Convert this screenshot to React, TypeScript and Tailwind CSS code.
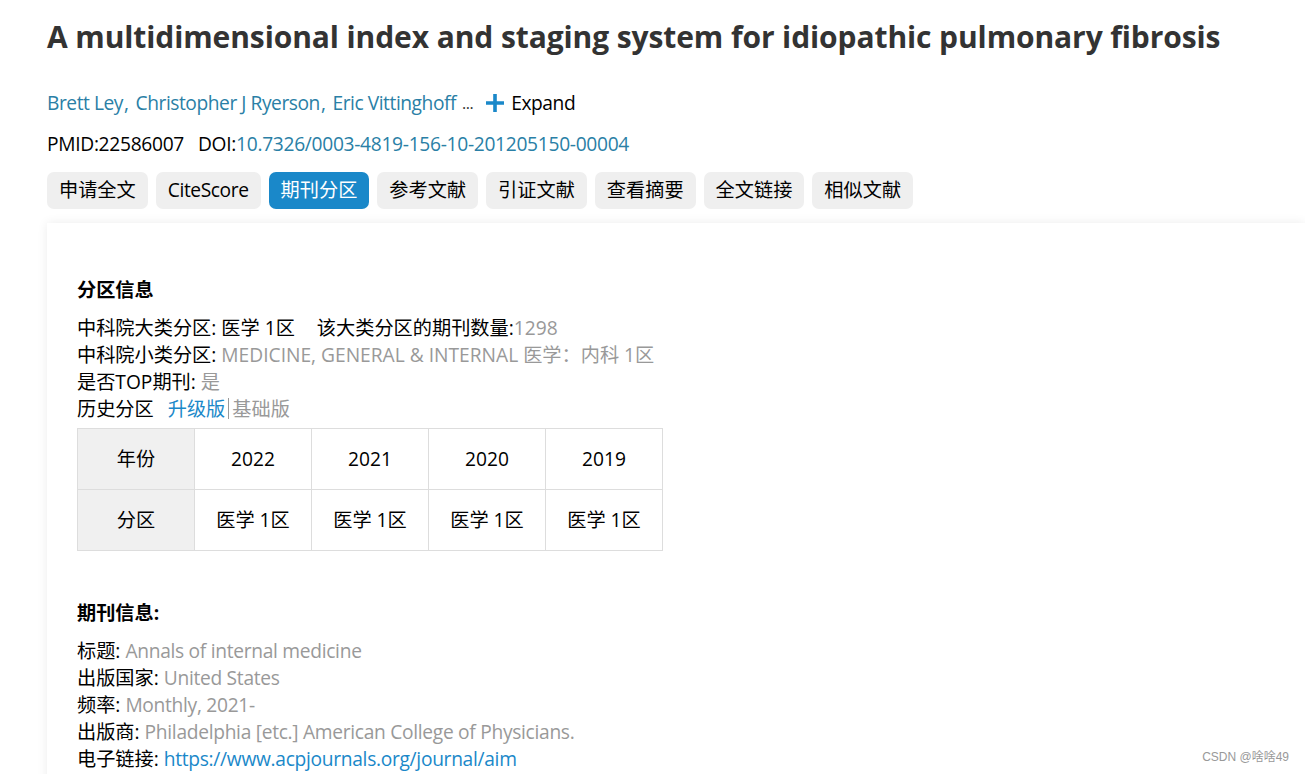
import React from "react";

const font = { fontFamily: '"Open Sans", "Noto Sans CJK SC", sans-serif' };

const buttons = ["申请全文", "CiteScore", "期刊分区", "参考文献", "引证文献", "查看摘要", "全文链接", "相似文献"];

export default function App() {
  const years = ["2022", "2021", "2020", "2019"];
  const lat = "tracking-[-0.3px]";
  return (
    <div className="relative h-[774px] w-[1305px] overflow-hidden bg-white text-[#222]" style={font}>
      <div className="pl-[47px] pt-[17px]">
        <h1 className="text-[30px] font-bold leading-[40px] text-[#333] tracking-[-0.1px]">
          A multidimensional index and staging system for idiopathic pulmonary fibrosis
        </h1>
        <div className="mt-[33px] flex items-center text-[19.2px] leading-[26px] tracking-[-0.45px]">
          <span className="text-[#2a7fa6]">Brett Ley</span>
          <span className="text-[#2a7fa6] ml-[1px] mr-[7px]">,</span>
          <span className="text-[#2a7fa6]">Christopher J Ryerson</span>
          <span className="text-[#2a7fa6] ml-[1px] mr-[7px]">,</span>
          <span className="text-[#2a7fa6]">Eric Vittinghoff</span>
          <span className="ml-[6px] text-[#333] text-[16px]">...</span>
          <span className="ml-[13px] flex items-center text-black">
            <svg width="18" height="18" viewBox="0 0 18 18" className="mr-[7px]">
              <path d="M9 0v18M0 9h18" stroke="#1a88c9" strokeWidth="3.6" />
            </svg>
            Expand
          </span>
        </div>
        <div className={"mt-[15px] text-[19.2px] leading-[26px] text-black " + lat}>
          PMID:22586007<span className="ml-[14px]">DOI:</span>
          <span className="text-[#2a7fa6]">10.7326/0003-4819-156-10-201205150-00004</span>
        </div>
        <div className="mt-[15px] flex gap-[8px]">
          {buttons.map((b) => (
            <div
              key={b}
              className={
                "flex h-[37px] items-center rounded-[7px] px-[12px] text-[19.2px] " +
                (b === "CiteScore" ? "tracking-[-0.4px] " : "") +
                (b === "期刊分区" ? "bg-[#1a88c9] text-white" : "bg-[#efefef] text-black")
              }
            >
              {b}
            </div>
          ))}
        </div>
      </div>
      <div className="ml-[47px] mt-[14px] bg-white pl-[30px] pt-[53px] shadow-[0_0_10px_rgba(0,0,0,0.08)] h-[600px]">
        <div className="text-[19.2px] font-bold leading-[27px] text-black">分区信息</div>
        <div className="mt-[11px] text-[19.2px] leading-[27px] text-black">
          <div>
            中科院大类分区: 医学 1区<span className="ml-[22px]">该大类分区的期刊数量:</span>
            <span className="text-[#999]">1298</span>
          </div>
          <div>
            中科院小类分区: <span className="text-[#999]">MEDICINE, GENERAL &amp; INTERNAL 医学：内科 1区</span>
          </div>
          <div>
            是否TOP期刊: <span className="text-[#999]">是</span>
          </div>
          <div className="flex items-center">
            历史分区
            <span className="ml-[14px] text-[#1a88c9]">升级版</span>
            <span className="mx-[3px] h-[21px] w-px bg-[#999]" />
            <span className="text-[#999]">基础版</span>
          </div>
        </div>
        <table className="mt-[6px] border-collapse text-[19.2px] text-black">
          <tbody>
            <tr>
              <td className="h-[61px] w-[117px] border border-[#ddd] bg-[#f0f0f0] text-center">年份</td>
              {years.map((y) => (
                <td key={y} className="h-[61px] w-[117px] border border-[#ddd] text-center">{y}</td>
              ))}
            </tr>
            <tr>
              <td className="h-[61px] w-[117px] border border-[#ddd] bg-[#f0f0f0] text-center">分区</td>
              {years.map((y) => (
                <td key={y} className="h-[61px] w-[117px] border border-[#ddd] text-center">医学 1区</td>
              ))}
            </tr>
          </tbody>
        </table>
        <div className="mt-[48px] text-[19.2px] font-bold leading-[27px] text-black">期刊信息:</div>
        <div className="mt-[11px] text-[19.2px] leading-[27px] text-black">
          <div>标题: <span className={"text-[#999] " + lat}>Annals of internal medicine</span></div>
          <div>出版国家: <span className={"text-[#999] " + lat}>United States</span></div>
          <div>频率: <span className={"text-[#999] " + lat}>Monthly, 2021-</span></div>
          <div>出版商: <span className={"text-[#999] " + lat}>Philadelphia [etc.] American College of Physicians.</span></div>
          <div>电子链接: <span className={"text-[#1a88c9] " + lat}>https://www.acpjournals.org/journal/aim</span></div>
        </div>
      </div>
      <div className="absolute bottom-[8px] right-[16px] text-[12px] text-[#999]" style={{ fontFamily: '"Liberation Sans", "Noto Sans CJK SC", sans-serif' }}>
        CSDN @啥啥49
      </div>
    </div>
  );
}
